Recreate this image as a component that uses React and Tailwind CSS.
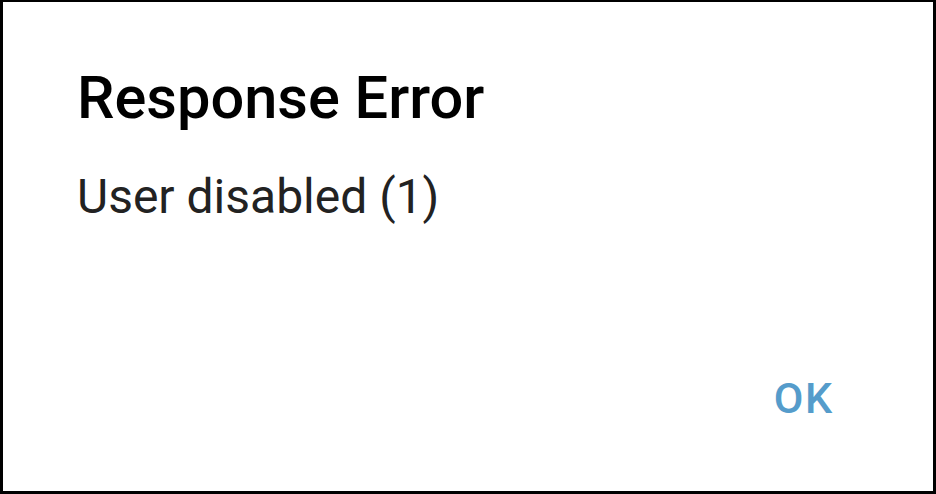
import React from "react";

export default function App() {
  return (
    <div className="flex h-[494px] w-[936px] flex-col border-t-2 border-r-[3px] border-b-[3px] border-l-[3px] border-black bg-white font-['Roboto',sans-serif]">
      <div className="pt-[67px] pl-[74px]">
        <h1 className="text-[59.5px] leading-none font-medium text-black">Response Error</h1>
        <p className="mt-[44px] text-[48px] leading-none text-[#222222]">User disabled (1)</p>
      </div>
      <div className="mt-auto flex justify-end pr-[99px] pb-[71px]">
        <button className="text-[43px] leading-none font-medium tracking-[0.04em] text-[#559ccb]">OK</button>
      </div>
    </div>
  );
}
